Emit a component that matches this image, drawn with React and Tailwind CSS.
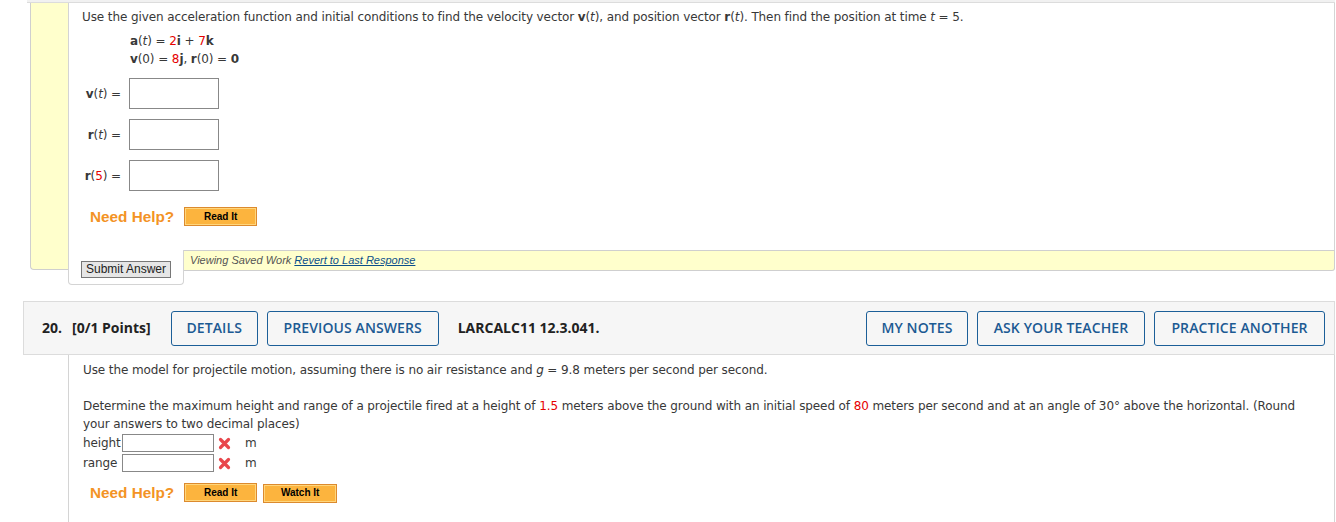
import React from "react";

function HelpButton({ label, width }) {
  return (
    <span
      className={`inline-flex items-center justify-center h-[19px] ${width} border border-[#dc8a2e] bg-[#fcb43e] shadow-[inset_0_0_0_1px_#ffd67c] font-['Liberation_Sans',Arial,sans-serif] text-[10px] font-bold text-black leading-none tracking-normal`}
    >
      {label}
    </span>
  );
}

function NeedHelp({ children }) {
  return (
    <div className="flex items-center gap-[10px]">
      <span className="font-['Liberation_Sans',Arial,sans-serif] text-[15.3px] tracking-normal font-bold text-[#f39325]">
        Need Help?
      </span>
      {children}
    </div>
  );
}

function RedX() {
  return (
    <svg width="13" height="13" viewBox="0 0 13 13" className="shrink-0 block">
      <path
        d="M2.5 2.5 L10.5 10.5 M10.5 2.5 L2.5 10.5"
        stroke="#e8474c"
        strokeWidth="3.2"
        strokeLinecap="round"
      />
    </svg>
  );
}

function AnswerRow({ label }) {
  return (
    <div className="flex items-center h-[31px]">
      <div className="w-[39px] text-right whitespace-nowrap">{label}</div>
      <input
        type="text"
        className="ml-[8px] w-[90px] h-[31px] border border-[#888] bg-white outline-none"
      />
    </div>
  );
}

function HeaderButton({ label, width, className = "" }) {
  return (
    <button
      className={`h-[35px] ${width} ${className} rounded-[3px] border border-[#1c5f98] bg-[#f6f6f6] text-[14px] font-semibold text-[#1c5a93] tracking-[0.1px]`}
    >
      {label}
    </button>
  );
}

export default function App() {
  return (
    <div className="w-[1336px] h-[522px] overflow-hidden bg-white text-[#383838] font-['DejaVu_Sans',Verdana,sans-serif] text-[12px] tracking-[-0.1px] leading-[18px]">
      {/* bottom of previous header */}
      <div className="ml-[27px] w-[1308px] h-[3px] bg-[#f1f1f1] border-b border-[#dcdcdc]" />

      {/* question 19 */}
      <div className="ml-[30px] w-[1305px] flex items-start">
        <div className="w-[38px] h-[267px] bg-[#ffffcc] border-l border-b border-[#cfcfcf] rounded-bl-[4px]" />
        <div className="flex-1 flex flex-col">
          <div className="h-[247px] border-l border-r border-[#d4d4d4] pl-[13px] pt-[5px]">
            <p>
              Use the given acceleration function and initial conditions to find the velocity vector{" "}
              <b>v</b>(<i>t</i>), and position vector <b>r</b>(<i>t</i>). Then find the position at
              time <i>t</i> = 5.
            </p>
            <div className="ml-[48px] mt-[6px]">
              <div>
                <b>a</b>(<i>t</i>) = <span className="text-[#e60000]">2</span>
                <b>i</b> + <span className="text-[#e60000]">7</span>
                <b>k</b>
              </div>
              <div>
                <b>v</b>(0) = <span className="text-[#e60000]">8</span>
                <b>j</b>, <b>r</b>(0) = <b>0</b>
              </div>
            </div>
            <div className="mt-[10px] flex flex-col gap-[10px]">
              <AnswerRow
                label={
                  <>
                    <b>v</b>(<i>t</i>) =
                  </>
                }
              />
              <AnswerRow
                label={
                  <>
                    <b>r</b>(<i>t</i>) =
                  </>
                }
              />
              <AnswerRow
                label={
                  <>
                    <b>r</b>(<span className="text-[#e60000]">5</span>) =
                  </>
                }
              />
            </div>
            <div className="mt-[16px] ml-[8px]">
              <NeedHelp>
                <HelpButton label="Read It" width="w-[73px]" />
              </NeedHelp>
            </div>
          </div>
          <div className="flex items-start">
            <div className="w-[116px] h-[35px] border-l border-r border-b border-[#d4d4d4] rounded-b-[4px] pl-[12px] pt-[10px]">
              <button className="h-[17px] w-[90px] border border-[#777] bg-[#e6e6e6] font-['Liberation_Sans',Arial,sans-serif] text-[12px] tracking-normal leading-none text-[#222]">
                Submit Answer
              </button>
            </div>
            <div className="flex-1 h-[21px] bg-[#ffffcc] border-t border-b border-r border-[#cfcfcf] rounded-br-[3px] pl-[6px] font-['Liberation_Sans',Arial,sans-serif] text-[11px] italic tracking-normal leading-[19px] text-[#555]">
              Viewing Saved Work{" "}
              <span className="underline text-[#0b4f8a]">Revert to Last Response</span>
            </div>
          </div>
        </div>
      </div>

      {/* question 20 header */}
      <div className="ml-[23px] mt-[16px] w-[1312px] h-[54px] bg-[#f6f6f6] border border-[#dcdcdc] flex items-center pl-[18px] pr-[9px] font-['Open_Sans',sans-serif] text-[14px] tracking-normal">
        <span className="font-bold text-[#222]">20.</span>
        <span className="ml-[10px] font-bold text-[#222]">[0/1 Points]</span>
        <HeaderButton label="DETAILS" width="w-[87px]" className="ml-[20px]" />
        <HeaderButton label="PREVIOUS ANSWERS" width="w-[172px]" className="ml-[9px]" />
        <span className="ml-[19px] font-bold text-[#222]">LARCALC11 12.3.041.</span>
        <div className="ml-auto flex gap-[9px]">
          <HeaderButton label="MY NOTES" width="w-[102px]" />
          <HeaderButton label="ASK YOUR TEACHER" width="w-[168px]" />
          <HeaderButton label="PRACTICE ANOTHER" width="w-[171px]" />
        </div>
      </div>

      {/* question 20 body */}
      <div className="ml-[68px] w-[1267px] h-[200px] border-l border-r border-[#d4d4d4] pl-[14px] pt-[6px]">
        <p>
          Use the model for projectile motion, assuming there is no air resistance and <i>g</i> = 9.8
          meters per second per second.
        </p>
        <p className="mt-[18px]">
          Determine the maximum height and range of a projectile fired at a height of{" "}
          <span className="text-[#e60000]">1.5</span> meters above the ground with an initial speed of{" "}
          <span className="text-[#e60000]">80</span> meters per second and at an angle of 30° above the
          horizontal. (Round
          <br />
          your answers to two decimal places)
        </p>
        <div className="flex items-center h-[20px]">
          <span className="w-[39px]">height</span>
          <input type="text" className="w-[92px] h-[18px] border border-[#888] outline-none" />
          <span className="ml-[4px]">
            <RedX />
          </span>
          <span className="ml-[14px]">m</span>
        </div>
        <div className="flex items-center h-[20px]">
          <span className="w-[39px]">range</span>
          <input type="text" className="w-[92px] h-[18px] border border-[#888] outline-none" />
          <span className="ml-[4px]">
            <RedX />
          </span>
          <span className="ml-[14px]">m</span>
        </div>
        <div className="mt-[10px] ml-[7px]">
          <NeedHelp>
            <HelpButton label="Read It" width="w-[73px]" />
            <span className="-ml-[4px]">
              <HelpButton label="Watch It" width="w-[74px]" />
            </span>
          </NeedHelp>
        </div>
      </div>
    </div>
  );
}
